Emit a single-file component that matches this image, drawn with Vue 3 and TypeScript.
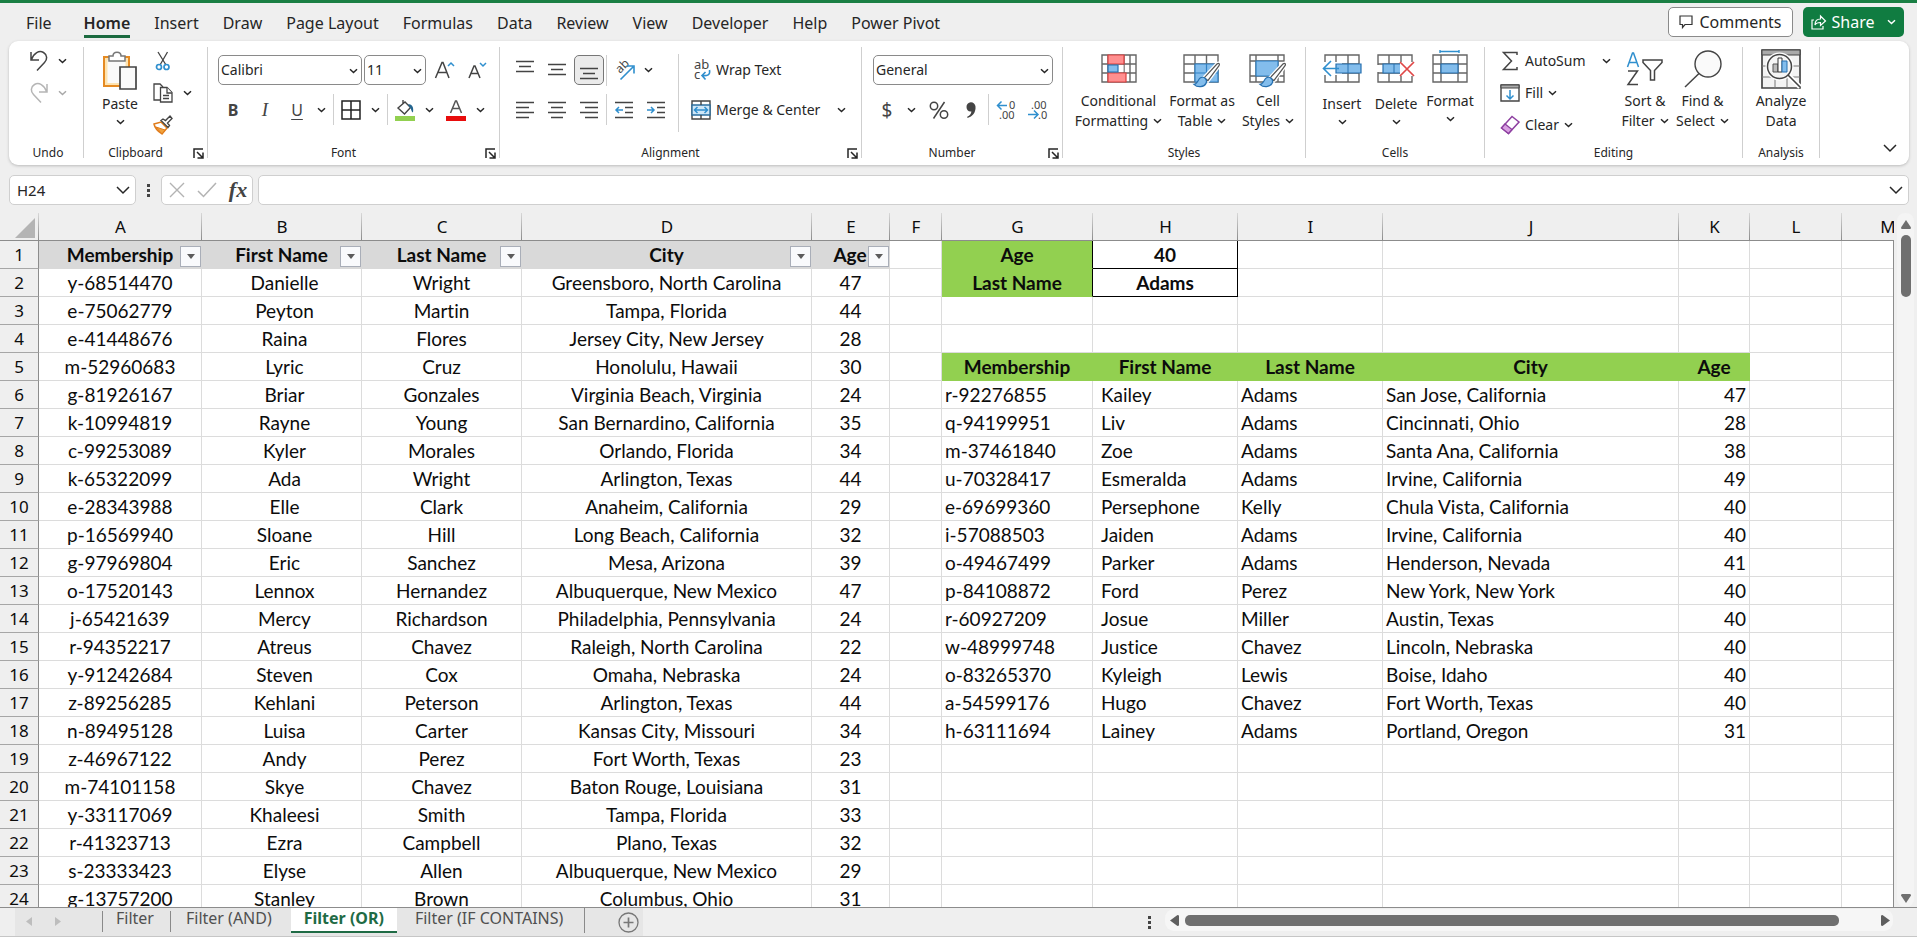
<script setup lang="ts">
import { ref, h } from 'vue'

interface Person {
  id: string
  first: string
  last: string
  city: string
  age: number
}

const parse = (text: string): Person[] =>
  text.trim().split('\n').map((line) => {
    const [id, first, last, city, age] = line.trim().split('|')
    return { id, first, last, city, age: Number(age) }
  })

const members = parse(`
y-68514470|Danielle|Wright|Greensboro, North Carolina|47
e-75062779|Peyton|Martin|Tampa, Florida|44
e-41448676|Raina|Flores|Jersey City, New Jersey|28
m-52960683|Lyric|Cruz|Honolulu, Hawaii|30
g-81926167|Briar|Gonzales|Virginia Beach, Virginia|24
k-10994819|Rayne|Young|San Bernardino, California|35
c-99253089|Kyler|Morales|Orlando, Florida|34
k-65322099|Ada|Wright|Arlington, Texas|44
e-28343988|Elle|Clark|Anaheim, California|29
p-16569940|Sloane|Hill|Long Beach, California|32
g-97969804|Eric|Sanchez|Mesa, Arizona|39
o-17520143|Lennox|Hernandez|Albuquerque, New Mexico|47
j-65421639|Mercy|Richardson|Philadelphia, Pennsylvania|24
r-94352217|Atreus|Chavez|Raleigh, North Carolina|22
y-91242684|Steven|Cox|Omaha, Nebraska|24
z-89256285|Kehlani|Peterson|Arlington, Texas|44
n-89495128|Luisa|Carter|Kansas City, Missouri|34
z-46967122|Andy|Perez|Fort Worth, Texas|23
m-74101158|Skye|Chavez|Baton Rouge, Louisiana|31
y-33117069|Khaleesi|Smith|Tampa, Florida|33
r-41323713|Ezra|Campbell|Plano, Texas|32
s-23333423|Elyse|Allen|Albuquerque, New Mexico|29
g-13757200|Stanley|Brown|Columbus, Ohio|31`)

const matches = parse(`
r-92276855|Kailey|Adams|San Jose, California|47
q-94199951|Liv|Adams|Cincinnati, Ohio|28
m-37461840|Zoe|Adams|Santa Ana, California|38
u-70328417|Esmeralda|Adams|Irvine, California|49
e-69699360|Persephone|Kelly|Chula Vista, California|40
i-57088503|Jaiden|Adams|Irvine, California|40
o-49467499|Parker|Adams|Henderson, Nevada|41
p-84108872|Ford|Perez|New York, New York|40
r-60927209|Josue|Miller|Austin, Texas|40
w-48999748|Justice|Chavez|Lincoln, Nebraska|40
o-83265370|Kyleigh|Lewis|Boise, Idaho|40
a-54599176|Hugo|Chavez|Fort Worth, Texas|40
h-63111694|Lainey|Adams|Portland, Oregon|31`)

interface Cell {
  text: string
  kind: string
  filter?: boolean
}

const headings = ['Membership', 'First Name', 'Last Name', 'City', 'Age']
const columns = 'ABCDEFGHIJKLM'.split('')

const leftCells = (row: number): Cell[] => {
  if (row === 1) return headings.map((text, i) => ({ text, kind: i === 4 ? 'head tight' : 'head', filter: true }))
  const p = members[row - 2]
  return [
    { text: p.id, kind: 'mid' },
    { text: p.first, kind: 'mid nudge' },
    { text: p.last, kind: 'mid' },
    { text: p.city, kind: 'mid' },
    { text: String(p.age), kind: 'mid' },
  ]
}

const rightCells = (row: number): Cell[] => {
  const blank = (): Cell => ({ text: '', kind: '' })
  if (row === 1 || row === 2) {
    return [
      { text: row === 1 ? 'Age' : 'Last Name', kind: 'green edge' },
      { text: row === 1 ? '40' : 'Adams', kind: 'criteria' },
      blank(), blank(), blank(),
    ]
  }
  if (row === 5) return headings.map((text) => ({ text, kind: 'green' }))
  const p = matches[row - 6]
  if (!p) return [0, 1, 2, 3, 4].map(blank)
  return [
    { text: p.id, kind: 'left' },
    { text: p.first, kind: 'left inset' },
    { text: p.last, kind: 'left' },
    { text: p.city, kind: 'left' },
    { text: String(p.age), kind: 'right' },
  ]
}

const rows = Array.from({ length: 24 }, (_, i) => {
  const n = i + 1
  const empty: Cell = { text: '', kind: '' }
  return { n, cells: [...leftCells(n), empty, ...rightCells(n), empty, empty] }
})

const menus = ['File', 'Home', 'Insert', 'Draw', 'Page Layout', 'Formulas', 'Data', 'Review', 'View', 'Developer', 'Help', 'Power Pivot']
const sheets = ['Filter', 'Filter (AND)', 'Filter (OR)', 'Filter (IF CONTAINS)']
const activeMenu = ref('Home')
const activeSheet = ref('Filter (OR)')
const cellRef = ref('H24')
const formula = ref('')

const stroke = (d: string, width: number, height: number) => () =>
  h('svg', { width, height, viewBox: `0 0 ${width} ${height}`, 'aria-hidden': 'true' }, [
    h('path', { d, fill: 'none', stroke: 'currentColor', 'stroke-width': 1.5 }),
  ])
const Chevron = stroke('M1 1.2l3.5 3.3L8 1.2', 9, 6)
const BigChevron = stroke('M1 1l6 6 6-6', 14, 9)
const Launcher = stroke('M1 10V1h9M4 4l5.5 5.5M10 4.5V10H4.5', 11, 11)
</script>

<template>
  <div class="app">
    <header class="menubar">
      <nav class="menus" aria-label="Ribbon tabs">
        <button v-for="m in menus" :key="m" class="menu" :class="{ active: m === activeMenu }" @click="activeMenu = m">{{ m }}</button>
      </nav>
      <div class="actions">
        <button class="comments">
          <svg width="14" height="14" viewBox="0 0 14 14"><path d="M1 1h12v8.5H6L3.5 12.5V9.5H1z" fill="none" stroke="#333" stroke-width="1.2" /></svg>
          Comments
        </button>
        <button class="share">
          <svg width="15" height="15" viewBox="0 0 15 15" fill="none" stroke="#fff" stroke-width="1.2"><path d="M3 5H1v9h11v-3M4 10c0-4 2-6 5.500-6V1l5 5-5 4.500V7.500C7 7.500 5 8 4 10z" /></svg>
          <span>Share</span><Chevron />
        </button>
      </div>
    </header>

    <section class="ribbon" aria-label="Home ribbon">
      <div class="group undo">
        <div class="body stack">
          <div class="line"><button aria-label="Undo">
            <svg width="20" height="22" viewBox="0 0 20 22" fill="none" stroke="#444" stroke-width="1.5"><path d="M2 2v8h8M2.500 9.500C5 3 10 0 14.500 2.500c4 2.500 4 7 1 10L8 20.500" /></svg>
          </button><button class="dd" aria-label="Undo list"><Chevron /></button></div>
          <div class="line faded"><button aria-label="Redo">
            <svg width="20" height="22" viewBox="0 0 20 22" fill="none" stroke="#b5b5b5" stroke-width="1.500"><path d="M18 2v8h-8M17.500 9.500C15 3 10 0 5.500 2.500c-4 2.500-4 7-1 10L12 20.500" /></svg>
          </button><button class="dd" aria-label="Redo list"><Chevron /></button></div>
        </div>
        <div class="caption"><span>Undo</span></div>
      </div>

      <div class="group clipboard">
        <div class="body">
          <button class="big paste">
            <svg width="36" height="40" viewBox="0 0 36 40"><path d="M2 6h25v29H2z" fill="#fde3b0" stroke="#e58a22" stroke-width="2" /><path d="M5.500 9h18v23h-18z" fill="#fafafa" /><path d="M7 10V5h4c0-5 8-5 8 0h4v5z" fill="#fff" stroke="#777" stroke-width="1.500" /><path d="M18 16h16v22H18z" fill="#fafafa" stroke="#444" stroke-width="1.700" /></svg>
            <span>Paste</span><Chevron />
          </button>
          <div class="stack tools">
            <div class="line"><button aria-label="Cut">
              <svg width="20" height="20" viewBox="0 0 20 20" fill="none"><path d="M5 1l8 13M14.500 1L7 14" stroke="#444" stroke-width="1.300" /><circle cx="6" cy="16" r="2.500" stroke="#2f8fce" stroke-width="1.700" /><circle cx="13.500" cy="16" r="2.500" stroke="#2f8fce" stroke-width="1.700" /></svg>
            </button></div>
            <div class="line"><button aria-label="Copy">
              <svg width="20" height="20" viewBox="0 0 20 20" fill="#fff" stroke="#444" stroke-width="1.300"><path d="M7 17H1V1h6l3 3" /><path d="M7.500 4.500H14l5 5v9.500H7.500z" /><path d="M14 4.500V10h5M10 12.500h6M10 15.500h6" /></svg>
            </button><button class="dd" aria-label="Copy options"><Chevron /></button></div>
            <div class="line"><button aria-label="Format Painter">
              <svg width="20" height="20" viewBox="0 0 20 20"><path d="M1 9l7-2 6 6-5 6c-3-2-7-5-8-10z" fill="#fff" stroke="#e07b1a" stroke-width="1.500" /><path d="M3 12l9 3-3 4z" fill="#f2a33c" stroke="#e07b1a" /><path d="M8 5.500l7 7 1.500-2-2-2.500L19 3.500 17 1l-4.500 4.500L10 4z" fill="#fff" stroke="#444" stroke-width="1.400" /></svg>
            </button></div>
          </div>
        </div>
        <div class="caption"><span>Clipboard</span><button class="launch" aria-label="Clipboard settings"><Launcher /></button></div>
      </div>

      <div class="group font">
        <div class="body rows">
          <div class="line">
            <label class="combo name"><select aria-label="Font"><option>Calibri</option></select><Chevron /></label>
            <label class="combo size"><select aria-label="Font size"><option>11</option></select><Chevron /></label>
            <button class="tb" aria-label="Increase font size"><svg width="22" height="20" viewBox="0 0 22 20" fill="none"><path d="M1.500 18L8 2.500h1L15 18M4 12.500h9" stroke="#444" stroke-width="1.500" /><path d="M14 6l3-3 3 3" stroke="#2f8fce" stroke-width="1.500" /></svg></button>
            <button class="tb" aria-label="Decrease font size"><svg width="20" height="20" viewBox="0 0 20 20" fill="none"><path d="M2 18L7 6h1l5 12M4 13.500h7.500" stroke="#444" stroke-width="1.500" /><path d="M13 3l3 3 3-3" stroke="#2f8fce" stroke-width="1.500" /></svg></button>
          </div>
          <div class="line second">
            <button class="tb glyph bold" aria-label="Bold">B</button>
            <button class="tb glyph ital" aria-label="Italic">I</button>
            <button class="tb glyph under" aria-label="Underline">U</button>
            <button class="dd" aria-label="Underline styles"><Chevron /></button>
            <i class="bar"></i>
            <button class="tb" aria-label="Borders"><svg width="20" height="20" viewBox="0 0 20 20"><path d="M1 1h18v18H1zM10 1v18M1 10h18" fill="none" stroke="#222" stroke-width="1.500" /></svg></button>
            <button class="dd" aria-label="Border styles"><Chevron /></button>
            <i class="bar"></i>
            <button class="tb" aria-label="Fill colour"><svg width="20" height="22" viewBox="0 0 20 22"><path d="M3 9l7-6 5.500 5.500-6 6.500zM8 5V1" fill="#fff" stroke="#444" stroke-width="1.400" /><path d="M13 5.500c4-1 6 3 5 8-2-1-1.500-4-3-4.500z" fill="#24658f" /><path d="M0 17h20v5H0z" fill="#92d050" /></svg></button>
            <button class="dd" aria-label="Fill colours"><Chevron /></button>
            <button class="tb" aria-label="Font colour"><svg width="20" height="22" viewBox="0 0 20 22"><path d="M4.500 14L9.500 2h1l5 12M6.500 9.500h7" fill="none" stroke="#555" stroke-width="1.500" /><path d="M0 17h20v5H0z" fill="#e80c0c" /></svg></button>
            <button class="dd" aria-label="Font colours"><Chevron /></button>
          </div>
        </div>
        <div class="caption"><span>Font</span><button class="launch" aria-label="Font settings"><Launcher /></button></div>
      </div>

      <div class="group alignment">
        <div class="body">
          <div class="rows">
            <div class="line">
              <button class="tb" aria-label="Top align"><svg class="raise" width="18" height="20" viewBox="0 0 18 20"><path d="M0 3.500h18M3 8.500h12M0 13.500h18" stroke="#444" stroke-width="1.500" /></svg></button>
              <button class="tb" aria-label="Middle align"><svg width="18" height="20" viewBox="0 0 18 20"><path d="M0 4.500h18M3 9.500h12M0 14.500h18" stroke="#444" stroke-width="1.500" /></svg></button>
              <button class="tb pressed" aria-label="Bottom align"><svg width="18" height="20" viewBox="0 0 18 20"><path d="M0 8.500h18M3 13.500h12M0 18.500h18" stroke="#444" stroke-width="1.500" /></svg></button>
              <i class="bar snug"></i>
              <button class="tb" aria-label="Orientation"><svg width="22" height="22" viewBox="0 0 22 22"><text transform="translate(7 15) rotate(-45)" font-size="12" fill="#444">ab</text><path d="M7.500 20.500L20 8M13.500 7H21v7.500" fill="none" stroke="#2f8fce" stroke-width="1.600" /></svg></button>
              <button class="dd" aria-label="Orientation list"><Chevron /></button>
            </div>
            <div class="line second">
              <button class="tb" aria-label="Align left"><svg width="18" height="20" viewBox="0 0 18 20"><path d="M0 2.500h18M0 7.500h13M0 12.500h18M0 17.500h13" stroke="#444" stroke-width="1.500" /></svg></button>
              <button class="tb" aria-label="Align centre"><svg width="18" height="20" viewBox="0 0 18 20"><path d="M0 2.500h18M3 7.500h12M0 12.500h18M3 17.500h12" stroke="#444" stroke-width="1.500" /></svg></button>
              <button class="tb" aria-label="Align right"><svg width="18" height="20" viewBox="0 0 18 20"><path d="M0 2.500h18M5 7.500h13M0 12.500h18M5 17.500h13" stroke="#444" stroke-width="1.500" /></svg></button>
              <i class="bar snug"></i>
              <button class="tb" aria-label="Decrease indent"><svg width="18" height="20" viewBox="0 0 18 20" fill="none" stroke="#444" stroke-width="1.500"><path d="M0 2.500h18M10 7.500h8M10 12.500h8M0 17.500h18" /><path d="M8 10H1M4 7l-3 3 3 3" stroke="#2f8fce" /></svg></button>
              <button class="tb" aria-label="Increase indent"><svg width="18" height="20" viewBox="0 0 18 20" fill="none" stroke="#444" stroke-width="1.500"><path d="M0 2.500h18M10 7.500h8M10 12.500h8M0 17.500h18" /><path d="M0 10h7M4 7l3 3-3 3" stroke="#2f8fce" /></svg></button>
            </div>
          </div>
          <div class="rows texts">
            <div class="line">
              <button class="wide"><svg width="20" height="22" viewBox="0 0 20 22" font-size="13" fill="#444"><text x="3" y="10">ab</text><text x="3" y="20">c</text><path d="M18.500 11c1 5-2 6-7.500 5.500M14.500 13L11 16.500l3.500 4" fill="none" stroke="#2f8fce" stroke-width="1.600" /></svg>Wrap Text</button>
            </div>
            <div class="line second">
              <button class="wide"><svg width="20" height="20" viewBox="0 0 20 20"><path d="M1 1h18v18H1z" fill="#fff" stroke="#444" stroke-width="1.400" /><path d="M1 5h18v10H1z" fill="#cfe7f8" stroke="#2d6f9e" stroke-width="1.400" /><path d="M10 1v4M10 15v4" stroke="#444" stroke-width="1.400" /><path d="M3.500 10h13M6.500 7l-3 3 3 3M13.500 7l3 3-3 3" fill="none" stroke="#2f8fce" stroke-width="1.500" /></svg>Merge &amp; Center</button>
              <button class="dd" aria-label="Merge options"><Chevron /></button>
            </div>
          </div>
        </div>
        <div class="caption"><span>Alignment</span><button class="launch" aria-label="Alignment settings"><Launcher /></button></div>
      </div>

      <div class="group number">
        <div class="body rows">
          <div class="line">
            <label class="combo format"><select aria-label="Number format"><option>General</option></select><Chevron /></label>
          </div>
          <div class="line second">
            <button class="tb glyph money" aria-label="Currency">$</button>
            <button class="dd" aria-label="Currency list"><Chevron /></button>
            <button class="tb pct" aria-label="Percent"><svg width="20" height="20" viewBox="0 0 20 20" fill="none" stroke="#444" stroke-width="1.500"><circle cx="5" cy="6" r="3.700" /><circle cx="15" cy="14.500" r="3.700" /><path d="M15.500 2L4.500 18.500" /></svg></button>
            <button class="tb" aria-label="Comma style"><svg width="12" height="18" viewBox="0 0 12 18"><path d="M1.500 6a4.500 4.500 0 0 1 9-.5c.5 6-3 10-8 11.500l-.3-1.200c2.800-1.300 4-3 4.200-5.300C3.500 11 1.500 9 1.500 6z" fill="#444" /></svg></button>
            <i class="bar snug"></i>
            <button class="tb" aria-label="Increase decimal"><svg width="20" height="22" viewBox="0 0 20 22" font-size="11" fill="#444"><text x="13" y="10">0</text><text x="3" y="20">.00</text><path d="M11 6.500H1.500M5.500 2.500l-4 4 4 4" fill="none" stroke="#2f8fce" stroke-width="1.500" /></svg></button>
            <button class="tb" aria-label="Decrease decimal"><svg width="20" height="22" viewBox="0 0 20 22" font-size="11" fill="#444"><text x="3" y="10">.00</text><text x="10" y="20">.0</text><path d="M0 15.500h10M6 11.500l4 4-4 4" fill="none" stroke="#2f8fce" stroke-width="1.500" /></svg></button>
          </div>
        </div>
        <div class="caption"><span>Number</span><button class="launch" aria-label="Number settings"><Launcher /></button></div>
      </div>

      <div class="group styles">
        <div class="body">
          <button class="big two cond">
            <svg width="36" height="34" viewBox="0 0 36 34"><path d="M1 5h34v27H1zM1 14h34M1 23h34M7 5v27M23 5v27M29 5v27" fill="#fff" stroke="#666" stroke-width="1.400" /><path d="M7 5h16v9H7zM7 23h18v9H7z" fill="#ff8f8f" stroke="#dc4040" stroke-width="1.200" /><path d="M7 15h10v7H7z" fill="#83bdec" stroke="#2670b0" stroke-width="1.200" /><path d="M18 15h4.500v7H18z" fill="#fff" /></svg>
            <span>Conditional</span><span>Formatting <Chevron /></span>
          </button>
          <button class="big two table">
            <svg width="38" height="34" viewBox="0 0 38 34"><path d="M1 5h34v27H1zM1 14h34M1 23h34M12 5v27M23.500 5v27" fill="#fff" stroke="#666" stroke-width="1.400" /><path d="M12 14h23v18H12zM23.500 14v18M12 23h23" fill="#83bdec" stroke="#2f80c4" stroke-width="1.200" /><g transform="translate(10 12) scale(.93)"><path d="M12 17L26 2c2-1 3 0 2 2L16 20z" fill="#fff" stroke="#fff" stroke-width="4" /><path d="M12 17L26 2c2-1 3 0 2 2L16 20z" fill="#fff" stroke="#555" stroke-width="1.300" /><path d="M1 24c4 0 4-5 7-7 4-2 8 2 6 6-2 4-9 5-13 1z" fill="#83bdec" stroke="#2670b0" stroke-width="1.300" /></g></svg>
            <span>Format as</span><span>Table <Chevron /></span>
          </button>
          <button class="big two cell">
            <svg width="38" height="34" viewBox="0 0 38 34"><path d="M1 5h34v27H1zM1 11h34M1 26h34M7 5v27M29 5v27" fill="#fff" stroke="#666" stroke-width="1.400" /><path d="M7 11h22v15H7z" fill="#83bdec" stroke="#2f80c4" stroke-width="1.200" /><g transform="translate(10 12) scale(.93)"><path d="M12 17L26 2c2-1 3 0 2 2L16 20z" fill="#fff" stroke="#fff" stroke-width="4" /><path d="M12 17L26 2c2-1 3 0 2 2L16 20z" fill="#fff" stroke="#555" stroke-width="1.300" /><path d="M1 24c4 0 4-5 7-7 4-2 8 2 6 6-2 4-9 5-13 1z" fill="#83bdec" stroke="#2670b0" stroke-width="1.300" /></g></svg>
            <span>Cell</span><span>Styles <Chevron /></span>
          </button>
        </div>
        <div class="caption"><span>Styles</span></div>
      </div>

      <div class="group cells">
        <div class="body">
          <button class="big cellop">
            <svg width="40" height="34" viewBox="0 0 40 34"><path d="M3 5h34v27H3zM14 5v27M26 5v27M3 14h34M3 23h34" fill="#fff" stroke="#666" stroke-width="1.400" /><path d="M0 12h20v13H0z" fill="#fff" /><path d="M14 14h25v9H14z" fill="#83bdec" stroke="#2670b0" stroke-width="1.200" /><path d="M26 14v9" stroke="#2670b0" /><path d="M17 18.500H2M9 11l-7.500 7.500L9 26" fill="none" stroke="#2f8fce" stroke-width="1.600" /></svg>
            <span>Insert</span><Chevron />
          </button>
          <button class="big cellop">
            <svg width="40" height="34" viewBox="0 0 40 34"><path d="M2 5h34v27H2zM13 5v27M25 5v27M2 14h34M2 23h34" fill="#fff" stroke="#666" stroke-width="1.400" /><path d="M0 15h7v7H0z" fill="#fff" /><path d="M7 14h18l4 4.500-4 4.500H7z" fill="#83bdec" stroke="#2670b0" stroke-width="1.200" /><path d="M18 14v9" stroke="#2670b0" /><path d="M24 12h14v14H24z" fill="#fff" /><path d="M24 12l14 14M38 12L24 26" stroke="#e04848" stroke-width="1.700" /></svg>
            <span>Delete</span><Chevron />
          </button>
          <button class="big two">
            <svg width="40" height="34" viewBox="0 0 40 34"><path d="M3 5h34v27H3zM11 5v27M28 5v27M3 14h34M3 23h34" fill="#fff" stroke="#666" stroke-width="1.400" /><path d="M11 14h17v9H11z" fill="#83bdec" stroke="#2670b0" stroke-width="1.200" /><path d="M10 1.500h19M10 0v3M29 0v3" stroke="#2f8fce" stroke-width="1.400" /></svg>
            <span>Format</span><Chevron />
          </button>
        </div>
        <div class="caption"><span>Cells</span></div>
      </div>

      <div class="group editing">
        <div class="body">
          <div class="stack">
            <div class="line"><button class="wide"><svg width="20" height="20" viewBox="0 0 20 20"><path d="M17 4V1.500H3.500l8 8.500-8 8.500H17V16" fill="none" stroke="#444" stroke-width="1.500" /></svg>AutoSum</button><button class="dd far" aria-label="AutoSum list"><Chevron /></button></div>
            <div class="line"><button class="wide"><svg width="20" height="20" viewBox="0 0 20 20"><path d="M1 2h18v16H1z" fill="#fff" stroke="#444" stroke-width="1.400" /><path d="M1 2h18v3H1z" fill="#aaa" stroke="#444" /><path d="M10 7v9M6.500 12.500L10 16l3.500-3.500" fill="none" stroke="#2f8fce" stroke-width="1.500" /></svg>Fill <Chevron /></button></div>
            <div class="line"><button class="wide"><svg width="20" height="20" viewBox="0 0 20 20"><path d="M1.500 13L12 1.500l7 5.500L8.500 18.500z" fill="#fff" stroke="#8d3fa0" stroke-width="1.500" /><path d="M1.500 13L5 9l7 5.500-3.500 4z" fill="#d9a0e2" stroke="#8d3fa0" stroke-width="1.300" /></svg>Clear <Chevron /></button></div>
          </div>
          <button class="big two tall sort">
            <svg width="38" height="36" viewBox="0 0 38 36" fill="none" stroke-width="1.500"><path d="M1.500 16L6.500 2h1l5 14M3.500 11.500h7" stroke="#2f8fce" /><path d="M2 20h9.500L2 33.500h10" stroke="#444" /><path d="M17 9h19v2.500l-7.500 8V29h-4v-9.500l-7.500-8z" stroke="#444" /></svg>
            <span>Sort &amp;</span><span>Filter <Chevron /></span>
          </button>
          <button class="big two tall find">
            <svg width="38" height="38" viewBox="0 0 38 38"><circle cx="24" cy="14" r="13" fill="#fafafa" stroke="#444" stroke-width="1.400" /><path d="M15 23.500L1 37" stroke="#444" stroke-width="1.500" /></svg>
            <span>Find &amp;</span><span>Select <Chevron /></span>
          </button>
        </div>
        <div class="caption"><span>Editing</span></div>
      </div>

      <div class="group analysis">
        <div class="body">
          <button class="big two tall analyze">
            <svg width="40" height="40" viewBox="0 0 40 40"><path d="M1 1h38v38H1z" fill="#f3f3f3" stroke="#444" stroke-width="1.700" /><path d="M1 1h38v5H1z" fill="#aaa" stroke="#444" /><path d="M1 17h38M1 28h38M14 28v11M26 28v11" stroke="#777" /><circle cx="18.500" cy="17.500" r="12" fill="#fff" stroke="#fff" stroke-width="4" /><path d="M27 26l12 12" stroke="#fff" stroke-width="5" /><circle cx="18.500" cy="17.500" r="12" fill="#f5f5f5" stroke="#444" stroke-width="1.500" /><path d="M12 15h5v8h-5z" fill="#bbb" stroke="#555" /><path d="M17 9h4v14h-4z" fill="#fff" stroke="#333" /><path d="M21 12h5v11h-5z" fill="#83bdec" stroke="#2670b0" /><path d="M27 26l12 12" stroke="#444" stroke-width="1.600" /></svg>
            <span>Analyze</span><span>Data</span>
          </button>
        </div>
        <div class="caption"><span>Analysis</span></div>
      </div>
      <button class="collapse" aria-label="Collapse ribbon"><BigChevron /></button>
    </section>

    <section class="formulabar">
      <label class="namebox"><input v-model="cellRef" aria-label="Name box" /><BigChevron /></label>
      <span class="dots"><i></i><i></i><i></i></span>
      <div class="fx">
        <button aria-label="Cancel"><svg width="16" height="16" viewBox="0 0 16 16"><path d="M1 1l14 14M15 1L1 15" stroke="#b3b3b3" stroke-width="1.400" /></svg></button>
        <button aria-label="Enter"><svg width="20" height="16" viewBox="0 0 20 16"><path d="M1 9l5.500 5.500L19 1" fill="none" stroke="#b3b3b3" stroke-width="1.500" /></svg></button>
        <button class="fn" aria-label="Insert function">fx</button>
      </div>
      <label class="formula"><input v-model="formula" aria-label="Formula" /><BigChevron /></label>
    </section>

    <main class="sheet">
      <div class="grid">
        <table>
          <colgroup>
            <col class="c-n" /><col v-for="c in columns" :key="c" :class="'c-' + c.toLowerCase()" />
          </colgroup>
          <thead>
            <tr>
              <th class="corner"><svg width="20" height="20" viewBox="0 0 20 20"><path d="M20 0v20H0z" fill="#b4b4b4" /></svg></th>
              <th v-for="c in columns" :key="c" scope="col">{{ c }}</th>
            </tr>
          </thead>
          <tbody>
            <tr v-for="row in rows" :key="row.n">
              <th scope="row">{{ row.n }}</th>
              <td v-for="(cell, i) in row.cells" :key="i" :class="cell.kind">
                {{ cell.text }}<button v-if="cell.filter" class="filter" :aria-label="'Filter ' + cell.text"><svg width="8" height="5" viewBox="0 0 8 5"><path d="M0 0h8L4 5z" fill="#5c5c5c" /></svg></button>
              </td>
            </tr>
          </tbody>
        </table>
      </div>
      <div class="vscroll">
        <svg width="10" height="9" viewBox="0 0 10 9"><path d="M5 0l5 7.500q0 1.500-1 1.500H1Q0 9 0 7.500z" fill="#6f6f6f" /></svg>
        <i class="thumb"></i>
        <svg width="10" height="9" viewBox="0 0 10 9"><path d="M5 9L0 1.500Q0 0 1 0h8q1 0 1 1.500z" fill="#6f6f6f" /></svg>
      </div>
    </main>

    <footer class="tabs">
      <div class="tabstrip">
        <div class="arrows">
          <svg width="6" height="9" viewBox="0 0 6 9"><path d="M6 0v9L0 4.500z" fill="#bdbdbd" /></svg>
          <svg width="6" height="9" viewBox="0 0 6 9"><path d="M0 0v9l6-4.500z" fill="#bdbdbd" /></svg>
        </div>
        <button v-for="s in sheets" :key="s" class="tab" :class="{ on: s === activeSheet }" @click="activeSheet = s">{{ s }}</button>
        <button class="add" aria-label="New sheet"><svg width="21" height="21" viewBox="0 0 21 21"><circle cx="10.500" cy="10.500" r="9.500" fill="none" stroke="#777" stroke-width="1.300" /><path d="M10.500 5.500v10M5.500 10.500h10" stroke="#777" stroke-width="1.700" /></svg></button>
      </div>
      <span class="dots"><i></i><i></i><i></i></span>
      <div class="hscroll">
        <svg width="9" height="11" viewBox="0 0 9 11"><path d="M9 1v9q0 1-1.500 1L0 5.500 7.500 0Q9 0 9 1z" fill="#5f5f5f" /></svg>
        <i class="thumb"></i>
        <svg width="9" height="11" viewBox="0 0 9 11"><path d="M0 1v9q0 1 1.500 1L9 5.500 1.500 0Q0 0 0 1z" fill="#5f5f5f" /></svg>
      </div>
    </footer>
  </div>
</template>

<style>
body { margin: 0; }
</style>

<style scoped>
.app { display: flex; flex-direction: column; height: 100vh; box-sizing: border-box; overflow: hidden; border-top: 3px solid #1a7f44; border-bottom: 1px solid #c6c6c6; background: #efefef; color: #262626; font: 14px/20px "Noto Sans", "Open Sans", sans-serif; }
.app *, .app *::after { box-sizing: border-box; }
button { display: inline-flex; align-items: center; justify-content: center; padding: 0; border: 0; background: none; color: inherit; font: inherit; white-space: nowrap; }
svg { flex: none; display: block; overflow: visible; }
input, select { min-width: 0; border: 0; background: none; color: inherit; font: inherit; outline: 0; }

.menubar { display: flex; justify-content: space-between; height: 38px; padding: 0 13px 0 26px; }
.menus { display: flex; gap: 24px; font-size: 16px; align-items: flex-start; padding-top: 8px; }
.menu { height: 27px; border-bottom: 3px solid transparent; }
.menu:first-child { margin-right: 8px; }
.menu.active { font-weight: 600; border-bottom-color: #1c6b40; }
.actions { display: flex; gap: 10px; padding-top: 4px; font-size: 16px; }
.actions button { height: 30px; border-radius: 5px; gap: 6px; }
.comments { width: 125px; border: 1px solid #8a8a8a; background: #fff; }
.share { width: 101px; background: #107c41; color: #fff; }
.share span { margin-right: 7px; }

.ribbon { display: flex; margin: 0 8px 0 9px; height: 124px; flex: none; padding-top: 6px; background: #fff; border-radius: 9px; box-shadow: 0 1px 3px #bbb; }
.group { display: flex; flex-direction: column; height: 115px; padding-right: 1px; background: linear-gradient(#cfcfcf, #cfcfcf) right top / 1px 111px no-repeat; }
.body { display: flex; height: 97px; }
.caption { display: flex; height: 18px; align-items: center; justify-content: center; font-size: 12px; line-height: 18px; position: relative; }
.launch { position: absolute; right: 3px; top: 4px; }
.undo { width: 75px; }
.undo .caption { padding-left: 4px; }
.clipboard { width: 124px; }
.font { width: 292px; }
.alignment { width: 362px; }
.number { width: 201px; }
.styles { width: 243px; }
.cells { width: 179px; }
.editing { width: 258px; }
.analysis { width: 77px; }
.clipboard .caption, .font .caption, .alignment .caption, .number .caption { padding-right: 20px; }

.stack { display: flex; flex-direction: column; gap: 8px; }
.stack .line { height: 24px; }
.line { display: flex; align-items: center; }
.undo .stack { padding: 2px 0 0 20px; }
.faded { color: #a8a8a8; }
.dd { width: 16px; height: 28px; }
.undo .dd { margin-left: 5px; }
.big { flex-direction: column; justify-content: flex-start; width: 54px; }
.big > span { display: flex; align-items: center; gap: 5px; }
.paste > svg:first-child { margin: 4px 0 3px; }
.cellop > svg:first-child { margin: 3px 0 10px; }
.two > svg:first-child { margin: 3px 0 7px; }
.tall > svg:first-child { height: 40px; margin: 2px 0; }
.big > svg:last-child { margin: 5px 0; }
.paste { margin-left: 9px; }
.tools { margin-left: 6px; padding-top: 2px; }
.tools .dd { margin-left: 6px; }

.rows { display: flex; flex-direction: column; padding: 8px 0 0 9px; }
.rows .line { height: 30px; }
.rows .second { margin-top: 9px; height: 31px; }
.combo, .namebox, .formula { position: relative; display: flex; height: 30px; border: 1px solid #8a8a8a; border-radius: 5px; background: #fff; }
.combo select { appearance: none; width: 100%; padding: 0 20px 0 2px; }
.combo svg { position: absolute; right: 3px; top: 12px; pointer-events: none; }
.name { width: 144px; margin: 0 2px 0 1px; }
.size { width: 62px; margin-right: 3px; }
.format { width: 180px; margin-left: 2px; }
.tb { width: 32px; height: 30px; }
.glyph { font-size: 16px; color: #444; }
.bold { font-weight: 700; }
.ital { font-family: "Liberation Serif", serif; font-style: italic; font-size: 19px; }
.under { text-decoration: underline; text-underline-offset: 3px; }
.money { font-size: 19px; }
.pct { margin-left: 4px; }
.bar { width: 1px; height: 31px; margin: 0 1px 0 4px; background: #cfcfcf; }
.bar.snug { margin-left: 1px; }
.dd + .tb[aria-label="Font colour"] { margin-left: 3px; }
.pressed { width: 30px; margin: 0 1px; border: 1px solid #777; border-radius: 5px; background: #ebebeb; }
.raise { margin-bottom: 4px; }
.alignment .rows:first-child { width: 179px; position: relative; }
.alignment .rows:first-child::after { content: ""; position: absolute; right: 0; top: 7px; height: 78px; width: 1px; background: #cfcfcf; }
.alignment .texts { padding-left: 12px; flex: 1; }
.texts .second { justify-content: space-between; padding-right: 12px; }
.wide { gap: 5px; height: 24px; }
.styles .body { padding-left: 10px; }
.cond { width: 91px; }
.table { width: 76px; }
.cell { width: 56px; }
.cells .body { padding-left: 9px; }
.editing .stack { width: 132px; padding: 2px 0 0 15px; }
.far { margin-left: 13px; }
.sort { width: 56px; }
.find { width: 59px; }
.analyze { width: 76px; }
.collapse { margin: 95px 12px 0 auto; width: 14px; height: 12px; }

.formulabar { display: flex; flex: none; height: 48px; padding: 10px 8px 8px 9px; }
.namebox { width: 127px; border-color: #cfcfcf; align-items: center; padding: 0 5px 0 7px; }
.namebox input { width: 100%; padding: 0; font-size: 15px; }
.dots { display: flex; flex-direction: column; justify-content: center; gap: 2px; }
.dots i { width: 3px; height: 3px; background: #444; }
.formulabar .dots { margin: 0 11px; height: 30px; }
.fx { display: flex; gap: 12px; align-items: center; justify-content: center; width: 92px; height: 30px; border: 1px solid #cfcfcf; border-radius: 5px; background: #fff; margin-right: 5px; padding-left: 2px; }
.fn { font: italic 700 22px/24px "Liberation Serif", serif; color: #444; }
.formula { flex: 1; border-color: #cfcfcf; align-items: center; padding-right: 5px; }
.formula input { flex: 1; }

.sheet { display: flex; flex: 1; min-height: 0; border-bottom: 1px solid #8c8c8c; }
.grid { flex: 1; min-width: 0; overflow: hidden; position: relative; background: #fff; }
.grid::after { content: ""; position: absolute; top: 28px; right: 0; bottom: 0; width: 1px; background: #8c8c8c; }
table { width: 1933px; table-layout: fixed; border-collapse: separate; border-spacing: 0; font: 19px/27px Lato, Carlito, sans-serif; font-variant-ligatures: none; color: #0c0c0c; }
.c-n { width: 39px; }
.c-a { width: 163px; }
.c-b, .c-c { width: 160px; }
.c-d { width: 290px; }
.c-e { width: 78px; }
.c-f { width: 52px; }
.c-g { width: 151px; }
.c-h, .c-i { width: 145px; }
.c-j { width: 296px; }
.c-k { width: 71px; }
.c-l, .c-m { width: 92px; }
th, td { position: relative; height: 28px; padding: 0; white-space: nowrap; border-right: 1px solid #dcdcdc; border-bottom: 1px solid #dcdcdc; }
th { background: #efefef; font: 17px/27px "Noto Sans", sans-serif; }
thead th { border-bottom-color: #8c8c8c; border-right: 0; }
thead th::after { content: ""; position: absolute; top: 0; right: 0; bottom: 0; width: 1px; background: linear-gradient(#d8d8d8, #8c8c8c); }
.corner svg { margin: 3px 0 0 15px; }
tbody th { border-right-color: #8c8c8c; border-bottom-color: #a6a6a6; }
.mid { text-align: center; }
.nudge { padding-left: 6px; }
.left { padding-left: 3px; }
.inset { padding-left: 8px; }
.right { text-align: right; padding-right: 3px; }
.head, .green, .criteria { text-align: center; font-weight: 700; }
.head { background: #d9d9d9; border-color: #d9d9d9; }
.tight { padding-right: 1px; }
.green { background: #92d050; border-color: #92d050; }
.edge { border-right-color: #000; }
.criteria { border-color: #000; }
.filter { position: absolute; right: 0; bottom: 1px; width: 21px; height: 21px; border: 1px solid #a9aeb8; background: #f9fafc; }

.vscroll { display: flex; flex-direction: column; align-items: center; width: 17px; margin: 0 3px; padding: 7px 0 4px; border-radius: 8px; background: #f4f4f4; }
.vscroll .thumb { width: 10px; height: 62px; margin: 6px 0 auto; border-radius: 5px; background: #6f6f6f; }

.tabs { display: flex; flex: none; height: 28px; }
.tabstrip { display: flex; margin-left: 15px; width: 628px; background: #e6e6e6; color: #505050; font-size: 16px; }
.arrows { display: flex; gap: 23px; width: 87px; padding: 9px 0 0 11px; }
.tab { height: 25px; padding: 0 16px 6px 14px; position: relative; }
.tab::before { content: ""; position: absolute; left: 0; top: 3px; height: 21px; width: 1px; background: #8a8a8a; }
.tab:nth-of-type(2) { padding-right: 19px; padding-left: 16px; }
.tab:nth-of-type(4) { padding: 0 21px 6px 18px; border-right: 1px solid #8a8a8a; }
.tab.on { padding: 0 13px 3px; border-bottom: 2px solid #1f6b45; background: #fff; color: #1f6b45; font-weight: 700; }
.tab.on::before, .tab.on + .tab::before { display: none; }
.add { margin: 3px 0 0 33px; width: 21px; height: 22px; }
.tabs > .dots { margin: 0 14px 0 auto; }
.hscroll { display: flex; align-items: center; width: 38%; height: 22px; margin: 1px 24px 0 0; padding: 0 3px 0 5px; border-radius: 9px; background: #f6f6f6; }
.hscroll .thumb { flex: 1; height: 11px; margin: 0 42px 0 6px; border-radius: 5px; background: #6f6f6f; }
</style>
